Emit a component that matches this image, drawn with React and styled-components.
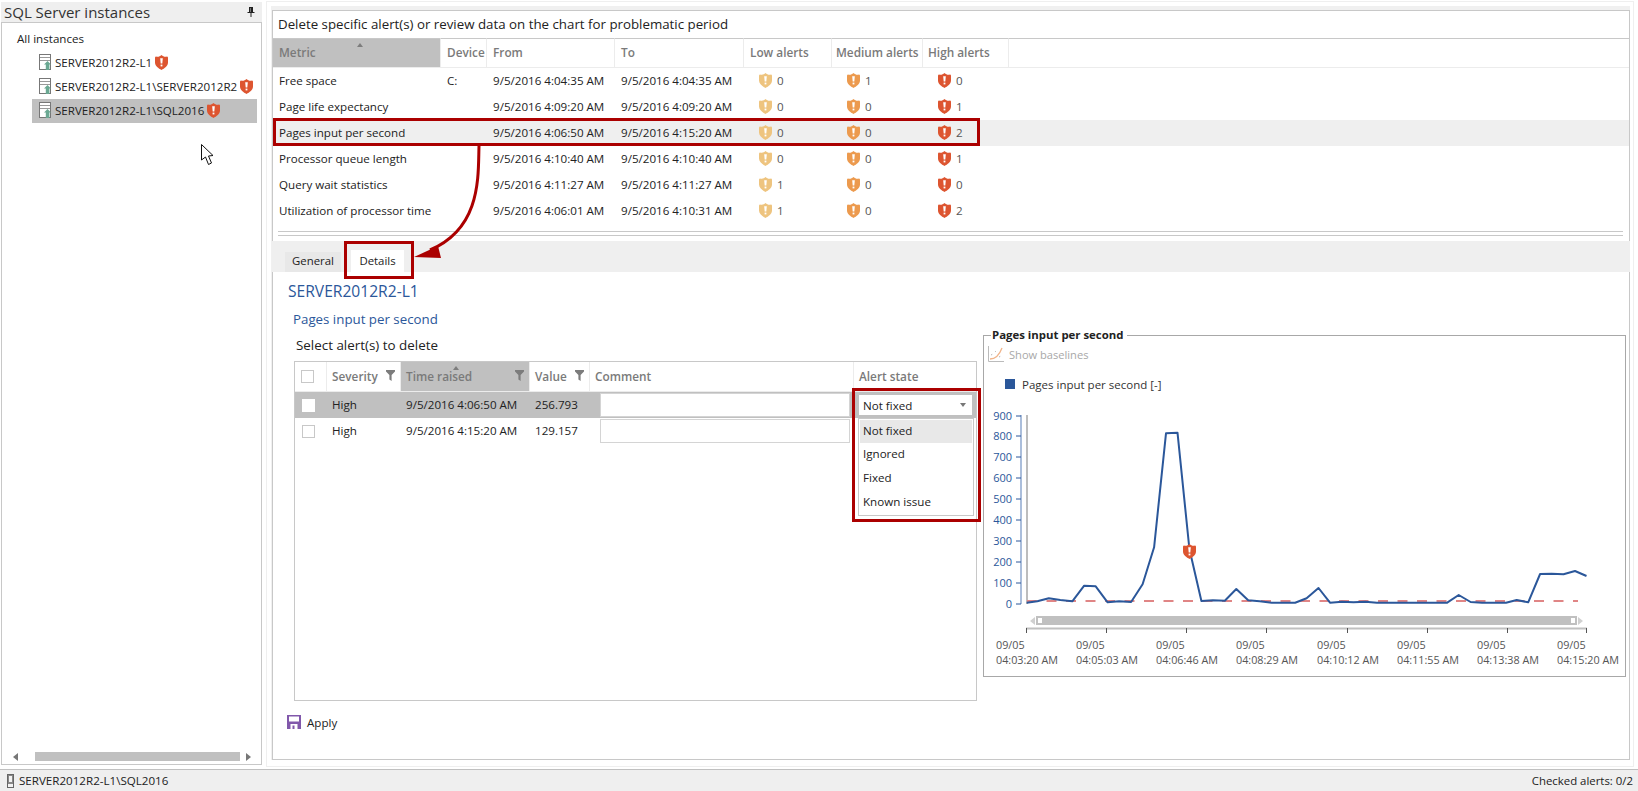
import React from 'react';
import styled, { createGlobalStyle } from 'styled-components';

const Global = createGlobalStyle`
  html, body { margin: 0; padding: 0; background: #fff; }
  body { font-family: "Open Sans", "Noto Sans", "Liberation Sans", sans-serif; color: #222; font-size: 11.6px; }
  * { box-sizing: border-box; }
`;

const Page = styled.div`position: relative; width: 1638px; height: 791px; display: flex; flex-direction: column; overflow: hidden; background: #fff;`;
const Main = styled.div`flex: 1; min-height: 0; display: flex; padding: 1px 0 2px 1px;`;

const LeftPane = styled.aside`width: 261px; flex: none; margin: 1px 0 2px; display: flex; flex-direction: column;`;
const PaneTitle = styled.div`height: 20px; background: #efefef; display: flex; align-items: center; justify-content: space-between; padding: 0 7px 0 3px; font-size: 15px; color: #333;`;
const Tree = styled.div`flex: 1; position: relative; border: 1px solid #c8c8c8; padding-top: 5px;`;
const TreeRoot = styled.div`height: 23px; line-height: 21px; padding-left: 15px;`;
const TreeItem = styled.div`height: 24px; margin: 0 4px 0 30px; padding: 0 0 2px 7px; display: flex; align-items: center; gap: 2px; white-space: nowrap; background: ${p => (p.$selected ? '#c0c0c0' : 'transparent')};`;
const TreeLabel = styled.span`margin: 0 1px 0 2px;`;
const HScroll = styled.div`position: absolute; left: 0; right: 0; bottom: 3px; height: 9px; display: flex; align-items: center; padding-left: 11px;`;
const HThumb = styled.div`width: 205px; height: 9px; margin: 0 6px 0 17px; background: #c0c0c0;`;

const RightPane = styled.main`flex: 1; min-width: 0; margin: 0 4px; border: 1px solid #efefef; padding: 4px 3px 6px 4px; display: flex;`;
const Inner = styled.div`flex: 1; min-width: 0; background: #f0f0f0; padding: 4px 0 0 1px; display: flex; flex-direction: column;`;

const Card = styled.section`background: #fff; border-top: 1px solid #c8c8c8; border-left: 1px solid #c8c8c8; border-right: 1px solid #c8c8c8;`;
const CardTitle = styled.div`height: 27px; line-height: 26px; padding-left: 5px; font-size: 13.3px; color: #222;`;
const MetricsGrid = styled.div`display: grid; grid-template-columns: 168px 46px 128px 129px 88px 91px 86px 1fr;`;
const HeadCell = styled.div`position: relative; height: 30px; border-top: 1px solid #c8c8c8; border-bottom: 1px solid #ececec; border-right: ${p => (p.$last ? '0' : '1px solid #ececec')}; background: ${p => (p.$sorted ? '#c0c0c0' : '#fff')}; color: #7a7a7a; font-weight: 600; font-size: 11.8px; line-height: 27px; padding-left: ${p => p.$pad || 6}px; white-space: nowrap;`;
const SortMark = styled.span`position: absolute; left: ${p => p.$at || '50%'}; top: 4px; width: 0; height: 0; border-left: 3px solid transparent; border-right: 3px solid transparent; border-bottom: 4px solid #7d7d7d;`;
const RowBand = styled.div`display: contents;`;
const Cell = styled.div`height: 26px; display: flex; align-items: center; gap: 5px; padding: 0 0 2px ${p => p.$pad || 6}px; white-space: nowrap; background: ${p => (p.$hot ? '#efefef' : '#fff')};`;
const CountText = styled.span`color: #555;`;
const CardFoot = styled.div`height: 7px;`;
const Track = styled.div`height: 5px; margin: 0 6px 5px 5px; border-top: 1px solid #c8c8c8; border-bottom: 1px solid #c8c8c8;`;

const TabStrip = styled.div`height: 31px; background: #efefef; display: flex; align-items: flex-end; gap: 10px; padding-left: 13px;`;
const Tab = styled.div`width: ${p => p.$w}px; height: ${p => (p.$active ? 22 : 20)}px; padding-bottom: ${p => (p.$active ? 2 : 4)}px; display: flex; align-items: center; justify-content: center; background: ${p => (p.$active ? '#fff' : '#e8e8e8')}; font-size: 11.4px;`;

const Panel = styled.section`flex: 1; min-height: 0; background: #fff; border: 1px solid #c8c8c8; border-top: 0; display: flex; flex-direction: column;`;
const ServerHeading = styled.h2`margin: 7px 0 0 15px; height: 24px; line-height: 24px; font-size: 15.6px; font-weight: 400; color: #2b579a;`;
const Body = styled.div`display: flex; gap: 6px; padding-left: 21px;`;
const LeftCol = styled.div`width: 683px; flex: none;`;
const SubHeading = styled.div`margin: 4px 0 0 -1px; height: 24px; line-height: 24px; font-size: 13.3px; color: #2b579a;`;
const SelectLabel = styled.div`margin: 3px 0 3px 2px; height: 24px; line-height: 23px; font-size: 13.4px; color: #222;`;
const AlertTable = styled.div`height: 340px; border: 1px solid #c8c8c8;`;
const AlertGrid = styled.div`display: grid; grid-template-columns: 32px 74px 129px 60px 264px 1fr;`;
const AHead = styled.div`position: relative; height: 30px; line-height: 28px; border-bottom: 1px solid #ececec; border-right: ${p => (p.$last ? '0' : '1px solid #ececec')}; padding-left: 5px; font-weight: 600; font-size: 11.8px; color: #7a7a7a; background: ${p => (p.$sorted ? '#c0c0c0' : '#fff')}; white-space: nowrap;`;
const FunnelSlot = styled.span`position: absolute; right: ${p => p.$right || 5}px; top: 8px; display: flex;`;
const CheckHead = styled.div`height: 30px; border-bottom: 1px solid #ececec; border-right: 1px solid #ececec; padding: 8px 0 0 6px;`;
const Check = styled.span`display: block; width: 13px; height: 13px; background: #fff; border: 1px solid ${p => (p.$bare ? '#fff' : '#c8c8c8')};`;
const ACell = styled.div`position: relative; height: 26px; display: flex; align-items: center; padding-left: ${p => p.$pad ?? 5}px; white-space: nowrap; background: ${p => (p.$sel ? '#c0c0c0' : '#fff')};`;
const CellText = styled.span`margin-top: -2px;`;
const CommentBox = styled.div`width: 250px; height: 24px; margin-left: 10px; background: #fff; border: 1px solid #d4d4d4;`;
const SelectBox = styled.div`width: 113px; height: 20px; margin-left: 5px; background: #fff; display: flex; align-items: center; justify-content: space-between; padding: 0 6px 0 4px;`;
const Caret = styled.span`width: 0; height: 0; border-left: 3px solid transparent; border-right: 3px solid transparent; border-top: 4px solid #777;`;
const Dropdown = styled.ul`position: absolute; z-index: 2; left: 4px; top: 26px; width: 116px; height: 98px; margin: 0; padding: 1px; list-style: none; background: #fff; border: 1px solid #c8c8c8;`;
const DropItem = styled.li`height: ${p => (p.$hot ? 23 : 24)}px; line-height: 22px; padding-left: 3px; background: ${p => (p.$hot ? '#e8e8e8' : '#fff')};`;
const ApplyRow = styled.div`margin: 11px 0 0 -7px; height: 20px; display: flex; align-items: center; gap: 6px;`;

const Group = styled.fieldset`flex: 1; min-width: 0; height: 349px; margin: 25px 3px 0 0; padding: 0 0 0 4px; border: 1px solid #a8a8a8;`;
const GroupLegend = styled.legend`margin-left: 3px; padding: 0 4px 0 1px; font-size: 11.4px; font-weight: 700; color: #222; line-height: 14px;`;
const ToolRow = styled.div`height: 18px; margin-top: 3px; display: flex; align-items: center; gap: 5px; font-size: 11.1px; color: #a8a8a8;`;
const LegendRow = styled.div`height: 18px; margin: 12px 0 0 17px; display: flex; align-items: center; gap: 7px; font-size: 11.5px; color: #333;`;
const LegendSwatch = styled.span`width: 10px; height: 10px; background: #2b579a;`;
const ChartSvg = styled.svg`display: block; margin: 11px 0 0 -4px; font-family: "Open Sans", "Noto Sans", sans-serif;`;

const Status = styled.footer`height: 22px; flex: none; background: #efefef; border-top: 1px solid #c0c0c0; display: flex; align-items: center; justify-content: space-between; padding: 0 5px 0 7px;`;
const StatusLeft = styled.div`display: flex; align-items: center; gap: 5px;`;
const StatusRight = styled.span`font-size: 11.4px;`;

const Mark = styled.div`position: absolute; z-index: 5; left: ${p => p.$x}px; top: ${p => p.$y}px; width: ${p => p.$w}px; height: ${p => p.$h}px; border: 3px solid #ab0000; pointer-events: none;`;
const Overlay = styled.svg`position: absolute; z-index: 6; left: 0; top: 0; pointer-events: none;`;

const SHIELD = { high: '#dd5530', med: '#ec9a4e', low: '#eec47f' };
const Shield = ({ level = 'high', x, y, w = 13, h = 15 }) => (
  <svg x={x} y={y} width={w} height={h} viewBox="0 0 13 15" style={{ flex: 'none' }}>
    <path d="M1 1.4 C2.6 2.1 4.6 1.8 6.5 0 C8.4 1.8 10.4 2.1 12 1.4 C13 1.6 13 2.4 13 3 V7.6 C13 11 9.4 13.6 6.5 15 C3.6 13.6 0 11 0 7.6 V3 C0 2.4 0 1.6 1 1.4 Z" fill={SHIELD[level]} />
    <path d="M5.2 3.2 H7.8 L7.3 8.6 H5.7 Z" fill="#fff" />
    <rect x="5.6" y="9.6" width="1.8" height="1.8" fill="#fff" />
  </svg>
);
const ServerIcon = () => (
  <svg width="12" height="16" viewBox="0 0 12 16" style={{ flex: 'none' }}>
    <rect x="0.5" y="0.5" width="11" height="15" fill="#fff" stroke="#777" />
    <path d="M1 3.5 H11 M1 6.5 H11" stroke="#999" />
    <path d="M8.5 7 L12 10.5 H10.4 V16 H6.8 V10.5 H5 Z" fill="#6aa892" />
  </svg>
);
const Pin = () => (
  <svg width="8" height="10" viewBox="0 0 8 10">
    <path d="M2 0.5 H6 M2.5 0.5 V5.5 M5.5 0.5 V5.5 M0.5 5.5 H7.5 M4 5.5 V10" stroke="#222" fill="none" />
    <rect x="3.4" y="1" width="2" height="4.5" fill="#222" />
  </svg>
);
const Funnel = () => (
  <svg width="9" height="11" viewBox="0 0 9 11">
    <path d="M0 0 H9 V1.5 L5.6 5 V11 L3.4 9.6 V5 L0 1.5 Z" fill="#7c7c7c" />
  </svg>
);
const Floppy = () => (
  <svg width="14" height="14" viewBox="0 0 14 14" style={{ flex: 'none' }}>
    <path d="M0 0 H14 V14 H0 Z" fill="#8158ab" />
    <rect x="2" y="1.5" width="10" height="5" fill="#fff" />
    <rect x="3.5" y="9" width="7" height="5" fill="#fff" />
    <rect x="5.5" y="10.5" width="2" height="3.5" fill="#8158ab" />
  </svg>
);
const TriLeft = () => <svg width="5" height="8" viewBox="0 0 5 8"><path d="M5 0 V8 L0 4 Z" fill="#777" /></svg>;
const TriRight = () => <svg width="5" height="8" viewBox="0 0 5 8"><path d="M0 0 V8 L5 4 Z" fill="#777" /></svg>;
const BaselineIcon = () => (
  <svg width="16" height="16" viewBox="0 0 16 16" style={{ flex: 'none' }}>
    <path d="M0.5 0 V15.5 H16" stroke="#bbb" fill="none" />
    <path d="M2 13 C7 13 11 10 14 2" stroke="#f0b48a" strokeWidth="1.3" fill="none" />
    <path d="M3 9 L5 8 M7 6 L8 5 M11 11 L13 10" stroke="#aaa" strokeDasharray="1 1" />
  </svg>
);
const StatusIcon = () => (
  <svg width="7" height="14" viewBox="0 0 7 14" style={{ flex: 'none' }}>
    <rect x="0.5" y="0.5" width="6" height="13" fill="#888" stroke="#666" />
    <rect x="2" y="2" width="3" height="6" fill="#f2f2f2" />
    <rect x="1" y="10" width="5" height="3" fill="#f2f2f2" />
  </svg>
);

const METRICS = [
  ['Free space', 'C:', '9/5/2016 4:04:35 AM', '9/5/2016 4:04:35 AM', 0, 1, 0],
  ['Page life expectancy', '', '9/5/2016 4:09:20 AM', '9/5/2016 4:09:20 AM', 0, 0, 1],
  ['Pages input per second', '', '9/5/2016 4:06:50 AM', '9/5/2016 4:15:20 AM', 0, 0, 2],
  ['Processor queue length', '', '9/5/2016 4:10:40 AM', '9/5/2016 4:10:40 AM', 0, 0, 1],
  ['Query wait statistics', '', '9/5/2016 4:11:27 AM', '9/5/2016 4:11:27 AM', 1, 0, 0],
  ['Utilization of processor time', '', '9/5/2016 4:06:01 AM', '9/5/2016 4:10:31 AM', 1, 0, 2],
];

const RAW = [[133,851],[158,847],[185,838],[212,843],[240,847],[268,800],[295,802],[323,850],[350,847],[378,849],[405,796],[432,685],[460,343],[487,341],[515,690],[543,846],[570,844],[598,845],[625,810],[653,844],[680,847],[708,851],[735,851],[763,851],[790,838],[818,807],[845,851],[873,848],[900,850],[928,848],[955,851],[983,851],[1010,851],[1038,851],[1065,851],[1092,851],[1120,851],[1147,828],[1175,849],[1202,851],[1230,851],[1258,851],[1283,843],[1310,850],[1338,765],[1365,764],[1393,766],[1420,756],[1447,771]];
const LINE = RAW.map(([x, y]) => `${(970 + x / 2.347).toFixed(1)},${(320 + y / 3).toFixed(1)}`).join(' ');
const Y_TICKS = [[900,417],[800,437],[700,458],[600,479],[500,500],[400,521],[300,542],[200,563],[100,584],[0,605]];
const X_TICKS = [1026,1106,1186,1266,1347,1427,1507,1586];
const X_LABELS = [[996,'04:03:20 AM'],[1076,'04:05:03 AM'],[1156,'04:06:46 AM'],[1236,'04:08:29 AM'],[1317,'04:10:12 AM'],[1397,'04:11:55 AM'],[1477,'04:13:38 AM'],[1557,'04:15:20 AM']];

const Chart = () => (
  <ChartSvg width="642" height="266" viewBox="984 405 642 266">
    <path d="M1021 416 V605" stroke="#8fa8cf" strokeWidth="1.5" />
    <path d="M1027 416 V605" stroke="#bdbdbd" strokeWidth="2" />
    {Y_TICKS.map(([v, y]) => (
      <g key={v}>
        <path d={`M1016 ${y} H1021`} stroke="#2b579a" />
        <text x="1012" y={y + 4} textAnchor="end" fontSize="11" fill="#2b579a">{v}</text>
      </g>
    ))}
    <path d="M1027 602 H1578" stroke="#e08585" strokeWidth="2" strokeDasharray="10 9.5" />
    <polyline points={LINE} fill="none" stroke="#2b579a" strokeWidth="2" strokeLinejoin="round" />
    <Shield x={1183} y={545} />
    <path d="M1035 618 L1030 622 L1035 626 Z" fill="#d0d0d0" />
    <rect x="1036" y="617" width="541" height="9" fill="#c0c0c0" />
    <rect x="1038" y="619" width="4" height="5" fill="#fff" />
    <rect x="1571" y="619" width="4" height="5" fill="#fff" />
    <path d="M1578 618 L1583 622 L1578 626 Z" fill="#d0d0d0" />
    <path d="M1026 629.5 H1587" stroke="#c0c0c0" strokeWidth="2" />
    {X_TICKS.map(x => <path key={x} d={`M${x + 0.5} 629 V634`} stroke="#555" />)}
    {X_LABELS.map(([x, t]) => (
      <g key={t} fontSize="10.8" fill="#555">
        <text x={x} y="650">09/05</text>
        <text x={x} y="665">{t}</text>
      </g>
    ))}
  </ChartSvg>
);

export default function App() {
  return (
    <Page>
      <Global />
      <Main>
        <LeftPane>
          <PaneTitle>SQL Server instances<Pin /></PaneTitle>
          <Tree>
            <TreeRoot>All instances</TreeRoot>
            <TreeItem><ServerIcon /><TreeLabel>SERVER2012R2-L1</TreeLabel><Shield /></TreeItem>
            <TreeItem><ServerIcon /><TreeLabel>SERVER2012R2-L1\SERVER2012R2</TreeLabel><Shield /></TreeItem>
            <TreeItem $selected><ServerIcon /><TreeLabel>SERVER2012R2-L1\SQL2016</TreeLabel><Shield /></TreeItem>
            <HScroll><TriLeft /><HThumb /><TriRight /></HScroll>
          </Tree>
        </LeftPane>
        <RightPane>
          <Inner>
            <Card>
              <CardTitle>Delete specific alert(s) or review data on the chart for problematic period</CardTitle>
              <MetricsGrid>
                <HeadCell $sorted>Metric<SortMark /></HeadCell>
                <HeadCell>Device</HeadCell>
                <HeadCell>From</HeadCell>
                <HeadCell>To</HeadCell>
                <HeadCell>Low alerts</HeadCell>
                <HeadCell $pad={4}>Medium alerts</HeadCell>
                <HeadCell $pad={5}>High alerts</HeadCell>
                <HeadCell $last />
                {METRICS.map((m, i) => {
                  const hot = i === 2;
                  return (
                    <RowBand key={m[0]}>
                      <Cell $hot={hot}>{m[0]}</Cell>
                      <Cell $hot={hot}>{m[1]}</Cell>
                      <Cell $hot={hot}>{m[2]}</Cell>
                      <Cell $hot={hot}>{m[3]}</Cell>
                      <Cell $hot={hot} $pad={15}><Shield level="low" /><CountText>{m[4]}</CountText></Cell>
                      <Cell $hot={hot} $pad={15}><Shield level="med" /><CountText>{m[5]}</CountText></Cell>
                      <Cell $hot={hot} $pad={15}><Shield level="high" /><CountText>{m[6]}</CountText></Cell>
                      <Cell $hot={hot} />
                    </RowBand>
                  );
                })}
              </MetricsGrid>
              <CardFoot />
              <Track />
            </Card>
            <TabStrip>
              <Tab $w={56}>General</Tab>
              <Tab $w={53} $active>Details</Tab>
            </TabStrip>
            <Panel>
              <ServerHeading>SERVER2012R2-L1</ServerHeading>
              <Body>
                <LeftCol>
                  <SubHeading>Pages input per second</SubHeading>
                  <SelectLabel>Select alert(s) to delete</SelectLabel>
                  <AlertTable>
                    <AlertGrid>
                      <CheckHead><Check /></CheckHead>
                      <AHead>Severity<FunnelSlot><Funnel /></FunnelSlot></AHead>
                      <AHead $sorted>Time raised<SortMark $at="52px" /><FunnelSlot><Funnel /></FunnelSlot></AHead>
                      <AHead>Value<FunnelSlot><Funnel /></FunnelSlot></AHead>
                      <AHead>Comment</AHead>
                      <AHead $last>Alert state</AHead>

                      <ACell $sel $pad={7}><Check $bare /></ACell>
                      <ACell $sel><CellText>High</CellText></ACell>
                      <ACell $sel><CellText>9/5/2016 4:06:50 AM</CellText></ACell>
                      <ACell $sel><CellText>256.793</CellText></ACell>
                      <ACell $sel $pad={0}><CommentBox /></ACell>
                      <ACell $sel $pad={0}>
                        <SelectBox>Not fixed<Caret /></SelectBox>
                        <Dropdown>
                          <DropItem $hot>Not fixed</DropItem>
                          <DropItem>Ignored</DropItem>
                          <DropItem>Fixed</DropItem>
                          <DropItem>Known issue</DropItem>
                        </Dropdown>
                      </ACell>

                      <ACell $pad={7}><Check /></ACell>
                      <ACell><CellText>High</CellText></ACell>
                      <ACell><CellText>9/5/2016 4:15:20 AM</CellText></ACell>
                      <ACell><CellText>129.157</CellText></ACell>
                      <ACell $pad={0}><CommentBox /></ACell>
                      <ACell />
                    </AlertGrid>
                  </AlertTable>
                  <ApplyRow><Floppy />Apply</ApplyRow>
                </LeftCol>
                <Group>
                  <GroupLegend>Pages input per second</GroupLegend>
                  <ToolRow><BaselineIcon />Show baselines</ToolRow>
                  <LegendRow><LegendSwatch />Pages input per second [-]</LegendRow>
                  <Chart />
                </Group>
              </Body>
            </Panel>
          </Inner>
        </RightPane>
      </Main>
      <Status>
        <StatusLeft><StatusIcon />SERVER2012R2-L1\SQL2016</StatusLeft>
        <StatusRight>Checked alerts: 0/2</StatusRight>
      </Status>
      <Mark $x={273} $y={118} $w={707} $h={28} />
      <Mark $x={344} $y={241} $w={70} $h={38} />
      <Mark $x={852} $y={388} $w={129} $h={134} />
      <Overlay width="1638" height="791" viewBox="0 0 1638 791">
        <path d="M479 146 C478 175 482 228 430 250" fill="none" stroke="#ab0000" strokeWidth="3" />
        <path d="M414 257 L438 246 L441 258 Z" fill="#ab0000" />
        <path d="M201.5 144.5 V160 L205.5 157 L208.5 164.5 L211.5 163 L208.5 156 L213 155.5 Z" fill="#fff" stroke="#111" strokeWidth="1" />
      </Overlay>
    </Page>
  );
}
